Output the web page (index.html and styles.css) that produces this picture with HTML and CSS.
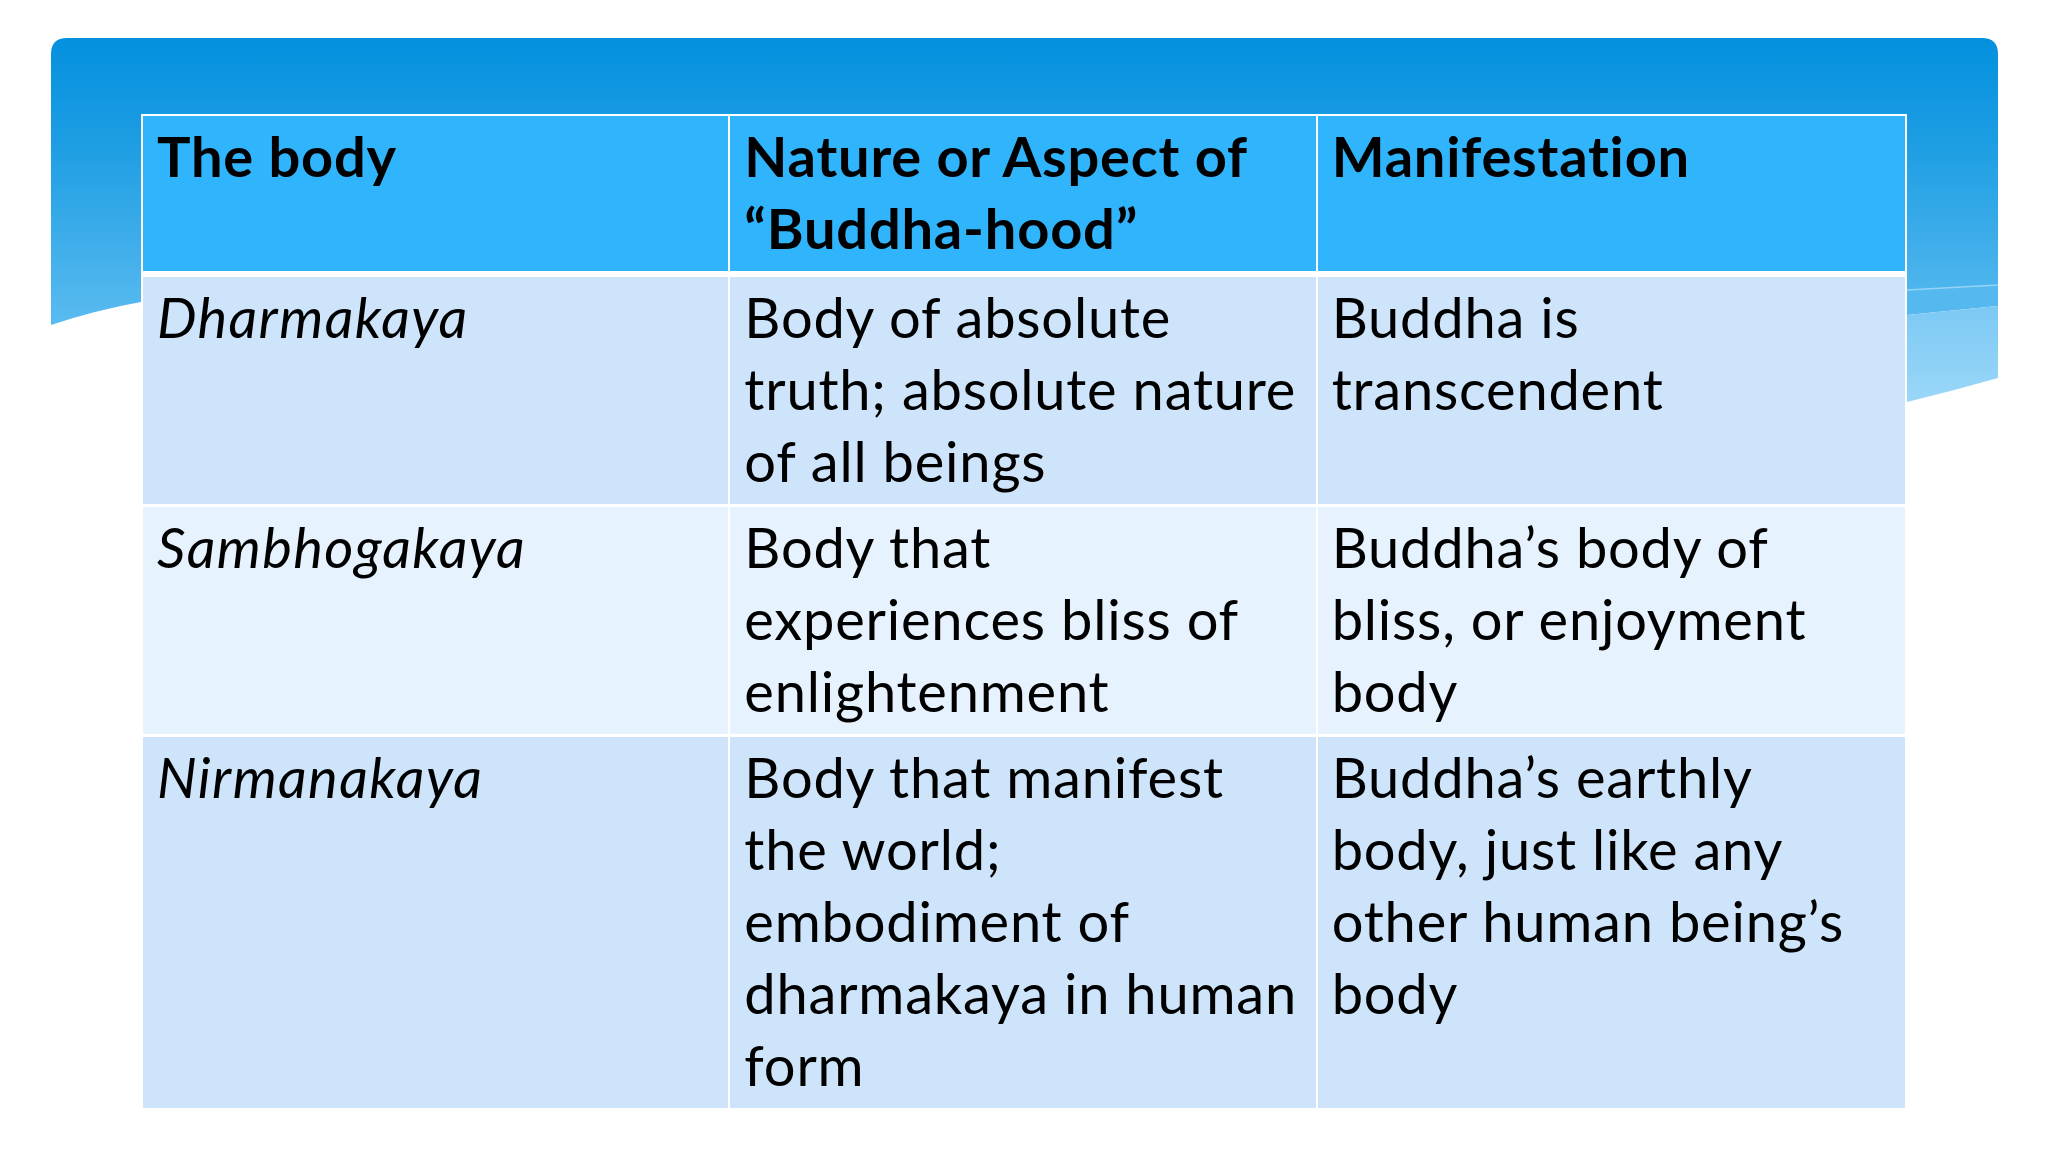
FILE: index.html
```html
<!DOCTYPE html>
<html lang="en">
<head>
<meta charset="utf-8">
<title>The three bodies of the Buddha</title>
<link rel="stylesheet" href="styles.css">
</head>
<body>
<div class="slide">
  <svg class="deco" width="2048" height="1152" viewBox="0 0 2048 1152" aria-hidden="true">
    <defs>
      <linearGradient id="bannerGrad" x1="0" y1="38" x2="0" y2="330" gradientUnits="userSpaceOnUse">
        <stop offset="0" stop-color="#0490DE"/>
        <stop offset="0.35" stop-color="#1C9DE3"/>
        <stop offset="1" stop-color="#5CBCF0"/>
      </linearGradient>
      <linearGradient id="lightGrad" x1="0" y1="306" x2="0" y2="402" gradientUnits="userSpaceOnUse">
        <stop offset="0" stop-color="#7CC9F4"/>
        <stop offset="1" stop-color="#9AD7F8"/>
      </linearGradient>
    </defs>
    <path d="M51 325 L51 54 Q51 38 67 38 L1982 38 Q1998 38 1998 54 L1998 285 L1907 290 L141 302 Q96 310 51 325 Z" fill="url(#bannerGrad)"/>
    <path d="M1907 290 L1998 285 L1998 306 L1907 315 Z" fill="#55B9EF"/>
    <path d="M1907 315 L1998 306 L1998 378 Q1952 391 1907 402 Z" fill="url(#lightGrad)"/>
    <path d="M1907 290 L1998 285" stroke="#93D3F6" stroke-width="1.5" fill="none"/>
  </svg>
  <div class="content">
    <table class="bodies">
      <colgroup>
        <col class="col">
        <col class="col">
        <col class="col">
      </colgroup>
      <thead>
        <tr>
          <th>The body</th>
          <th>Nature or Aspect of<br>“Buddha-hood”</th>
          <th>Manifestation</th>
        </tr>
      </thead>
      <tbody>
        <tr class="band">
          <td class="name">Dharmakaya</td>
          <td>Body of absolute<br>truth; absolute nature<br>of all beings</td>
          <td>Buddha is<br>transcendent</td>
        </tr>
        <tr class="plain">
          <td class="name">Sambhogakaya</td>
          <td>Body that<br>experiences bliss of<br>enlightenment</td>
          <td>Buddha’s body of<br>bliss, or enjoyment<br>body</td>
        </tr>
        <tr class="band last">
          <td class="name">Nirmanakaya</td>
          <td>Body that manifest<br>the world;<br>embodiment of<br>dharmakaya in human<br>form</td>
          <td>Buddha’s earthly<br>body, just like any<br>other human being’s<br>body</td>
        </tr>
      </tbody>
    </table>
  </div>
</div>
</body>
</html>
```

FILE: styles.css
```css
html, body {
  margin: 0;
  padding: 0;
  background: #ffffff;
}

.slide {
  width: 2048px;
  height: 1152px;
  display: grid;
  overflow: hidden;
}

.deco,
.content {
  grid-area: 1 / 1;
}

.deco {
  display: block;
}

.content {
  padding: 114px 0 0 141px;
}

.bodies {
  width: 1766px;
  table-layout: fixed;
  border-collapse: separate;
  border-spacing: 0;
  border-top: 2px solid #ffffff;
  border-left: 2px solid #ffffff;
  border-right: 2px solid #ffffff;
  font-family: Lato, "Open Sans", sans-serif;
  font-size: 56px;
  letter-spacing: 0.8px;
  line-height: 72px;
  color: #000000;
}

.bodies th,
.bodies td {
  text-align: left;
  vertical-align: top;
  padding: 4px 12px 7px 14px;
  white-space: nowrap;
  border-right: 2px solid #ffffff;
}

.bodies th:last-child,
.bodies td:last-child {
  border-right: none;
}

.bodies th {
  font-weight: 700;
  background: #30B4FB;
  border-bottom: 6px solid #ffffff;
}

.bodies td {
  font-weight: 400;
  border-bottom: 3px solid #ffffff;
}

.bodies tr.last td {
  border-bottom: none;
}

.bodies tr.band td {
  background: #CDE4FB;
}

.bodies tr.plain td {
  background: #E6F2FD;
}

.bodies td.name {
  font-style: italic;
  letter-spacing: 1.4px;
}
```
